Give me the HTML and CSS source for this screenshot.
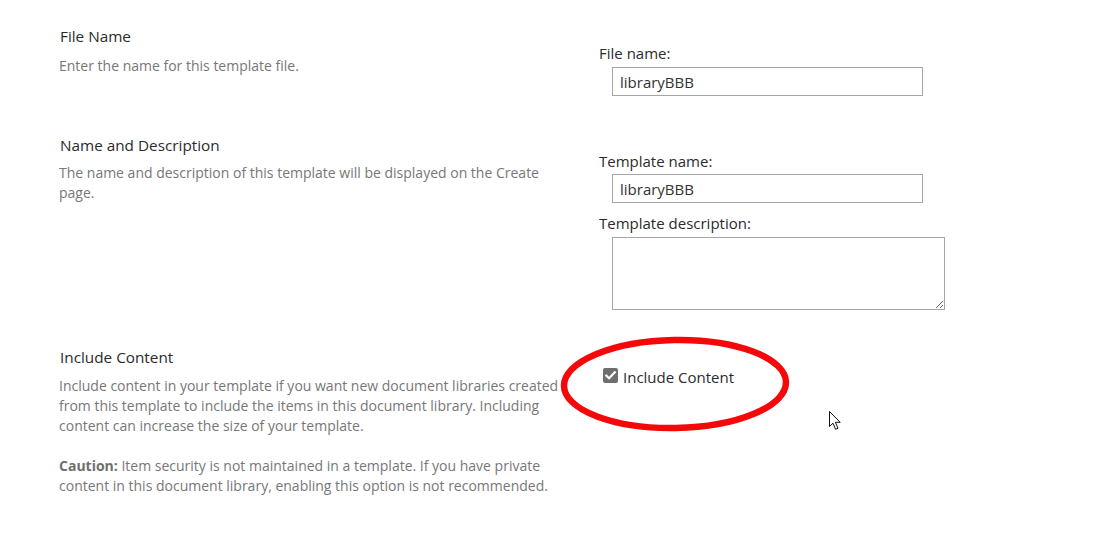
FILE: index.html
```html
<!DOCTYPE html>
<html lang="en">
<head>
<meta charset="utf-8">
<title>Save as Template</title>
<link rel="stylesheet" href="styles.css">
</head>
<body>
<div class="form">
  <section class="row row-file">
    <div class="info">
      <h3 class="title">File Name</h3>
      <p class="desc">Enter the name for this template file.</p>
    </div>
    <div class="controls ctl-file">
      <label class="label" for="fn">File name:</label>
      <input class="textbox" id="fn" type="text" value="libraryBBB">
    </div>
  </section>

  <section class="row row-name">
    <div class="info">
      <h3 class="title">Name and Description</h3>
      <p class="desc desc-name">The name and description of this template will be displayed on the Create page.</p>
    </div>
    <div class="controls ctl-name">
      <label class="label" for="tn">Template name:</label>
      <input class="textbox tn" id="tn" type="text" value="libraryBBB">
      <label class="label label-desc" for="td">Template description:</label>
      <textarea class="textarea" id="td"></textarea>
    </div>
  </section>

  <section class="row row-content">
    <div class="info">
      <h3 class="title">Include Content</h3>
      <p class="desc desc-content">Include content in your template if you want new document libraries created from this template to include the items in this document library. Including content can increase the size of your template.</p>
      <p class="desc caution"><b>Caution:</b> Item security is not maintained in a template. If you have private content in this document library, enabling this option is not recommended.</p>
    </div>
    <div class="controls ctl-content">
      <div class="check-row">
        <span class="checkbox"><svg viewBox="0 0 15 15" width="15" height="15"><path d="M3.3 7.6 L6.1 10.3 L11.8 4.4" fill="none" stroke="#fff" stroke-width="2.2" stroke-linecap="square"/></svg></span>
        <span class="check-label">Include Content</span>
      </div>
      <svg class="annotation" width="234" height="100" viewBox="0 0 234 100"><ellipse cx="117" cy="50" rx="111" ry="44" fill="none" stroke="#f4080a" stroke-width="6.5" transform="rotate(-1 117 50)"/></svg>
      <svg class="pointer" width="16" height="22" viewBox="0 0 16 22"><path d="M1.5 1.5 L1.5 16.5 L5 13.2 L7.6 19.3 L10 18.3 L7.4 12.3 L12.2 12.3 Z" fill="#fff" stroke="#111" stroke-width="1" stroke-linejoin="miter"/></svg>
    </div>
  </section>
</div>
</body>
</html>
```

FILE: styles.css
```css
* { box-sizing: border-box; }
html, body { margin: 0; padding: 0; background: #fff; }
body {
  font-family: "Open Sans", "Noto Sans", sans-serif;
  color: #333;
  width: 1095px;
  height: 553px;
  overflow: hidden;
}
.form { padding-left: 59px; }
.row {
  display: grid;
  grid-template-columns: 540px 1fr;
  align-items: start;
}
.row-file { padding-top: 26px; }
.row-name { padding-top: 39px; }
.row-content { padding-top: 37px; }

.title {
  margin: 0 0 0 1px;
  font-size: 15.3px;
  line-height: 20px;
  font-weight: 400;
  color: #2b2b2b;
}
.desc {
  margin: 10px 0 0;
  font-size: 14px;
  line-height: 20px;
  color: #777;
  width: 510px;
}
.desc-name { margin-top: 8px; }
.desc-content { margin-top: 9px; }
.desc.caution { margin-top: 20px; }
.desc b { font-weight: 700; color: #6f6f6f; }

.controls { display: flex; flex-direction: column; align-items: flex-start; position: relative; }
.ctl-file { padding-top: 17px; }
.ctl-name { padding-top: 16px; }
.ctl-content { padding-top: 21px; }

.label {
  font-size: 15px;
  line-height: 20px;
  color: #2b2b2b;
}
.textbox {
  margin: 4px 0 0 13px;
  width: 311px;
  height: 29px;
  border: 1px solid #a6a6a6;
  padding: 0 7px;
  font-family: inherit;
  font-size: 15px;
  color: #333;
  background: #fff;
  outline: none;
}
.textbox.tn { margin-top: 3px; }
.label-desc { margin-top: 10px; }
.textarea {
  margin: 4px 0 0 13px;
  width: 333px;
  height: 73px;
  border: 1px solid #a6a6a6;
  font-family: inherit;
  font-size: 15px;
  background: #fff;
  outline: none;
}

.check-row { display: flex; align-items: flex-start; gap: 5px; margin-left: 4px; }
.checkbox {
  width: 15px;
  height: 15px;
  margin-top: 0;
  background: #6e6e6e;
  border-radius: 2px;
  display: block;
}
.checkbox svg { display: block; }
.check-label { font-size: 15px; line-height: 20px; color: #2b2b2b; margin-top: -1px; }

.annotation { position: absolute; left: -41px; top: -13px; }
.pointer { position: absolute; left: 229px; top: 63px; }
```
